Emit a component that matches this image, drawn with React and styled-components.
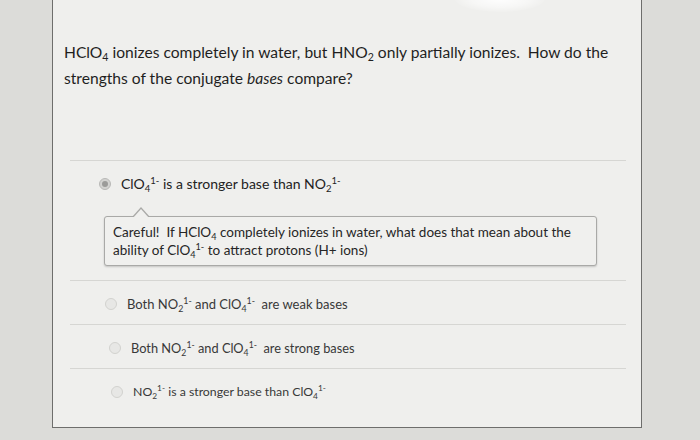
import React from "react";
import styled, { createGlobalStyle } from "styled-components";

const GlobalStyle = createGlobalStyle`
  body {
    margin: 0;
    background: #dcdcd9;
    font-family: Lato, "Open Sans", sans-serif;
  }
`;

const Page = styled.div`
  position: relative;
  height: 440px;
  overflow: hidden;
  padding-left: 52px;
  box-sizing: border-box;
`;

// photo glare at the top of the screen
const Glare = styled.div`
  position: absolute;
  top: -14px;
  left: 455px;
  width: 90px;
  height: 26px;
  border-radius: 50%;
  background: radial-gradient(ellipse at center, rgba(255, 255, 255, 0.95) 0%, rgba(255, 255, 255, 0.5) 45%, rgba(255, 255, 255, 0) 75%);
`;

const Card = styled.div`
  width: 590px;
  height: 428px;
  box-sizing: border-box;
  background: #efefed;
  border: 1px solid #6e6e6c;
  border-top: none;
  padding: 39px 14px 0 11px;
`;

const Question = styled.p`
  margin: 0;
  font-size: 15.6px;
  line-height: 26px;
  color: #1f1f1f;
  white-space: nowrap;

  em {
    font-style: italic;
  }
`;

const Options = styled.div`
  margin: 69px 1px 0 6px;
`;

const Option = styled.div`
  border-top: 1px solid #d6d6d3;
  padding: 15px 0 ${({ last }) => (last ? "0" : "12px")} ${({ indent }) => indent}px;
`;

const OptionLine = styled.div`
  display: flex;
  align-items: center;
  gap: 10px;
  font-size: ${({ size }) => size}px;
  line-height: 16px;
  color: ${({ muted }) => (muted ? "#383838" : "#222222")};
  white-space: nowrap;
`;

const Radio = styled.span`
  flex: none;
  width: 12px;
  height: 12px;
  border-radius: 50%;
  box-sizing: border-box;
  border: 1px solid ${({ checked }) => (checked ? "#b9b9b7" : "#d2d2cf")};
  background: ${({ checked }) => (checked ? "#d3d3d1" : "#e7e7e5")};
  display: flex;
  align-items: center;
  justify-content: center;

  &::after {
    content: "";
    display: ${({ checked }) => (checked ? "block" : "none")};
    width: 6px;
    height: 6px;
    border-radius: 50%;
    background: #9b9b99;
  }
`;

const Feedback = styled.div`
  position: relative;
  margin: 24px 0 2px 5px;
  width: 493px;
  box-sizing: border-box;
  background: #f0f0ee;
  border: 1px solid #a9a9a7;
  border-radius: 3px;
  box-shadow: 0 1px 2px rgba(0, 0, 0, 0.18);
  padding: 6px 8px;
  font-size: 13.5px;
  line-height: 18px;
  color: #262626;
  white-space: nowrap;

  &::before,
  &::after {
    content: "";
    position: absolute;
    left: 27px;
    width: 0;
    height: 0;
    border-left: 9px solid transparent;
    border-right: 9px solid transparent;
  }

  &::before {
    top: -10px;
    border-bottom: 10px solid #a9a9a7;
  }

  &::after {
    top: -8px;
    left: 28px;
    border-left-width: 8px;
    border-right-width: 8px;
    border-bottom: 9px solid #f0f0ee;
  }
`;

const Sub = styled.sub`
  font-size: 0.68em;
  line-height: 0;
  vertical-align: -0.3em;
`;

const Sup = styled.sup`
  font-size: 0.68em;
  line-height: 0;
  vertical-align: 0.55em;
`;

const ClO4 = () => (
  <>
    ClO<Sub>4</Sub>
    <Sup>1-</Sup>
  </>
);

const NO2 = () => (
  <>
    NO<Sub>2</Sub>
    <Sup>1-</Sup>
  </>
);

export default function App() {
  return (
    <>
      <GlobalStyle />
      <Page>
        <Glare />
        <Card>
          <Question>
            HClO<Sub>4</Sub> ionizes completely in water, but HNO<Sub>2</Sub> only partially ionizes.&nbsp; How do the
            <br />
            strengths of the conjugate <em>bases</em> compare?
          </Question>

          <Options>
            <Option indent={29}>
              <OptionLine size={14}>
                <Radio checked />
                <span>
                  <ClO4 /> is a stronger base than <NO2 />
                </span>
              </OptionLine>
              <Feedback>
                Careful!&nbsp; If HClO<Sub>4</Sub> completely ionizes in water, what does that mean about the
                <br />
                ability of <ClO4 /> to attract protons (H+ ions)
              </Feedback>
            </Option>

            <Option indent={35}>
              <OptionLine size={13} muted>
                <Radio />
                <span>
                  Both <NO2 /> and <ClO4 />&nbsp; are weak bases
                </span>
              </OptionLine>
            </Option>

            <Option indent={39}>
              <OptionLine size={12.8} muted>
                <Radio />
                <span>
                  Both <NO2 /> and <ClO4 />&nbsp; are strong bases
                </span>
              </OptionLine>
            </Option>

            <Option indent={41} last>
              <OptionLine size={12.3} muted>
                <Radio />
                <span>
                  <NO2 /> is a stronger base than <ClO4 />
                </span>
              </OptionLine>
            </Option>
          </Options>
        </Card>
      </Page>
    </>
  );
}
